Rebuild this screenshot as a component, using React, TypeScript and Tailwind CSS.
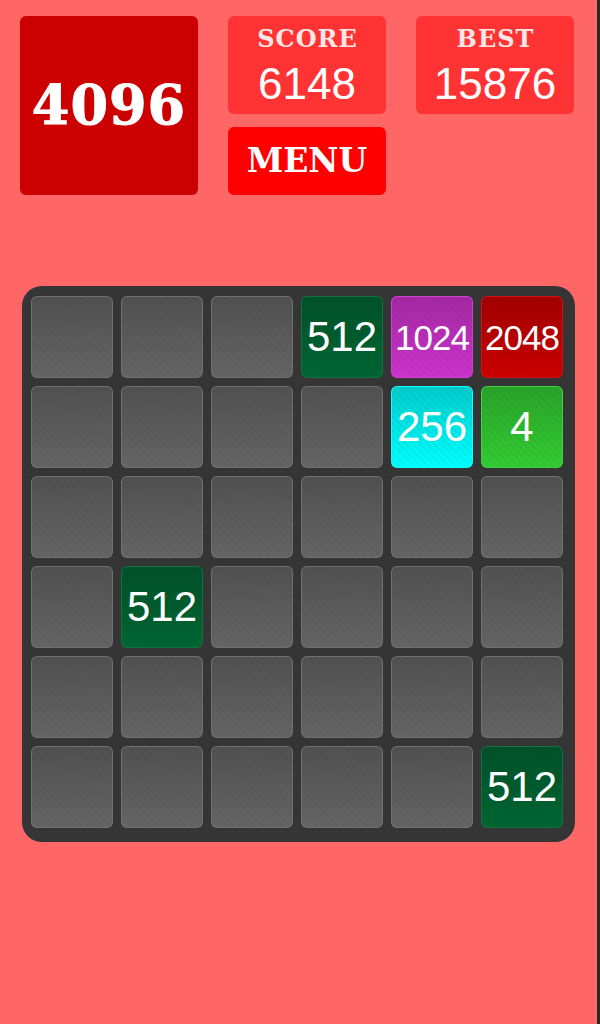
const serif = "font-['DejaVu_Serif','Liberation_Serif',serif]";
const sans = "font-['Liberation_Sans',Arial,sans-serif]";

const tileStyles: Record<number, string> = {
  0: "bg-[#656565]",
  4: "bg-[#33cc33]",
  256: "bg-[#00ffff]",
  512: "bg-[#006633]",
  1024: "bg-[#cc33cc]",
  2048: "bg-[#cc0000]",
};

const textSize: Record<number, string> = {
  4: "text-[42px]",
  256: "text-[42px]",
  512: "text-[42px]",
  1024: "text-[35px] tracking-[-1px]",
  2048: "text-[35px] tracking-[-1px]",
};

const board = [
  [0, 0, 0, 512, 1024, 2048],
  [0, 0, 0, 0, 256, 4],
  [0, 0, 0, 0, 0, 0],
  [0, 512, 0, 0, 0, 0],
  [0, 0, 0, 0, 0, 0],
  [0, 0, 0, 0, 0, 512],
];

function Tile({ value }: { value: number }) {
  return (
    <div
      className={`relative w-[82px] h-[82px] rounded-[6px] overflow-hidden border border-white/[0.07] ${tileStyles[value]}`}
    >
      <div className="absolute inset-0 bg-[image:linear-gradient(to_bottom,rgba(0,0,0,0.2),rgba(0,0,0,0))]" />
      <div className="absolute inset-0 bg-[image:repeating-linear-gradient(45deg,rgba(0,0,0,0.04)_0px,rgba(0,0,0,0.04)_2px,transparent_2px,transparent_5px)]" />
      {value > 0 && (
        <div
          className={`relative flex h-full items-center justify-center text-white leading-none ${sans} ${textSize[value]}`}
        >
          {value}
        </div>
      )}
    </div>
  );
}

function StatBox({ label, value }: { label: string; value: string }) {
  return (
    <div className="w-[158px] h-[98px] rounded-[6px] bg-[#ff3333] flex flex-col items-center">
      <div className={`mt-[10px] text-[24px] leading-[26px] font-bold tracking-[1px] pl-[1px] text-[#ffe6e6] ${serif}`}>
        {label}
      </div>
      <div className={`mt-[10px] text-[44px] leading-[44px] text-white ${sans}`}>{value}</div>
    </div>
  );
}

export default function App() {
  return (
    <div className="flex w-[600px] h-[1024px]">
      <div className="flex-1 bg-[#ff6666]">
        <div className="flex gap-[30px] pt-[16px] pl-[20px]">
          <div className="w-[178px] h-[179px] rounded-[6px] bg-[#cc0000] flex items-center justify-center">
            <span
              className={`text-[54px] font-bold text-white tracking-[1px] [-webkit-text-stroke:1px_white] ${serif}`}
            >
              4096
            </span>
          </div>
          <div className="flex flex-col gap-[13px]">
            <div className="flex gap-[30px]">
              <StatBox label="SCORE" value="6148" />
              <StatBox label="BEST" value="15876" />
            </div>
            <div
              className={`w-[158px] h-[68px] rounded-[6px] bg-[#ff0000] flex items-center justify-center text-white text-[33px] font-bold ${serif}`}
            >
              MENU
            </div>
          </div>
        </div>

        <div className="ml-[22px] mt-[91px] w-[553px] rounded-[20px] bg-[#353535] pt-[10px] pl-[9px] pr-[12px] pb-[14px] grid grid-cols-[repeat(6,82px)] gap-[8px]">
          {board.flat().map((v, i) => (
            <Tile key={i} value={v} />
          ))}
        </div>
      </div>
      <div className="w-[3px] bg-[#2a2a2a]" />
    </div>
  );
}
